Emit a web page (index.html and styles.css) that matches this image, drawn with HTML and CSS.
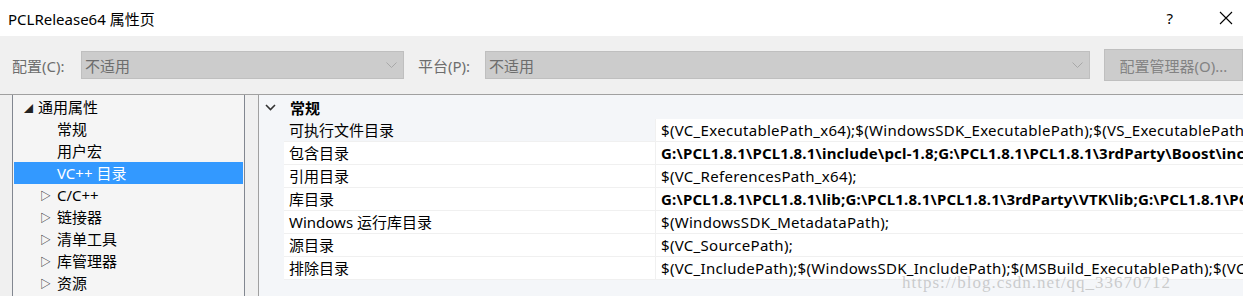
FILE: index.html
```html
<!DOCTYPE html>
<html lang="zh-CN">
<head>
  <meta charset="UTF-8">
  <title>PCLRelease64 属性页</title>
  <link rel="stylesheet" href="styles.css">
</head>
<body>
  <header class="titlebar">
    <div class="title">PCLRelease64 属性页</div>
    <div class="title-btns">
      <span class="help">?</span>
      <svg class="close" width="14" height="14" viewBox="0 0 14 14"><path d="M1 1L13 13M13 1L1 13" stroke="#000" stroke-width="1.1" fill="none"/></svg>
    </div>
  </header>

  <div class="toolbar">
    <label class="lbl lbl-config">配置(C):</label>
    <div class="combo combo-config"><span>不适用</span><svg class="chev" width="11" height="6" viewBox="0 0 11 6"><path d="M0.5 0.5L5.5 5.5L10.5 0.5" stroke="#a8a8a8" fill="none"/></svg></div>
    <label class="lbl lbl-platform">平台(P):</label>
    <div class="combo combo-platform"><span>不适用</span><svg class="chev" width="11" height="6" viewBox="0 0 11 6"><path d="M0.5 0.5L5.5 5.5L10.5 0.5" stroke="#a8a8a8" fill="none"/></svg></div>
    <button class="mgr-btn" disabled>配置管理器(O)...</button>
  </div>

  <div class="main">
    <div class="tree">
      <div class="node root"><span class="tri-open">◢</span>通用属性</div>
      <div class="node leaf">常规</div>
      <div class="node leaf">用户宏</div>
      <div class="node leaf selected">VC++ 目录</div>
      <div class="node closed"><span class="tri">▷</span>C/C++</div>
      <div class="node closed"><span class="tri">▷</span>链接器</div>
      <div class="node closed"><span class="tri">▷</span>清单工具</div>
      <div class="node closed"><span class="tri">▷</span>库管理器</div>
      <div class="node closed"><span class="tri">▷</span>资源</div>
    </div>

    <div class="grid">
      <div class="cat">
        <svg class="cat-chev" width="11" height="7" viewBox="0 0 11 7"><path d="M1 1L5.5 5.5L10 1" stroke="#333" stroke-width="1.6" fill="none"/></svg>
        <span>常规</span>
      </div>
      <div class="row first"><div class="name">可执行文件目录</div><div class="val">$(VC_ExecutablePath_x64);$(WindowsSDK_ExecutablePath);$(VS_ExecutablePath);$(MSBuild_ExecutablePath);</div></div>
      <div class="row"><div class="name">包含目录</div><div class="val bold">G:\PCL1.8.1\PCL1.8.1\include\pcl-1.8;G:\PCL1.8.1\PCL1.8.1\3rdParty\Boost\include\boost-1_64;</div></div>
      <div class="row"><div class="name">引用目录</div><div class="val">$(VC_ReferencesPath_x64);</div></div>
      <div class="row"><div class="name">库目录</div><div class="val bold">G:\PCL1.8.1\PCL1.8.1\lib;G:\PCL1.8.1\PCL1.8.1\3rdParty\VTK\lib;G:\PCL1.8.1\PCL1.8.1\3rdParty\Boost\lib;</div></div>
      <div class="row"><div class="name">Windows 运行库目录</div><div class="val">$(WindowsSDK_MetadataPath);</div></div>
      <div class="row"><div class="name">源目录</div><div class="val">$(VC_SourcePath);</div></div>
      <div class="row"><div class="name">排除目录</div><div class="val">$(VC_IncludePath);$(WindowsSDK_IncludePath);$(MSBuild_ExecutablePath);$(VC_LibraryPath_x64);</div></div>
      <div class="watermark">https://blog.csdn.net/qq_33670712</div>
    </div>
  </div>
</body>
</html>
```

FILE: styles.css
```css
body {
  margin: 0;
  background: #f0f0f0;
  font-family: "Noto Sans", "Noto Sans CJK SC", sans-serif;
  font-size: 15px;
  color: #000;
  width: 1243px;
  height: 296px;
  overflow: hidden;
}
.titlebar {
  height: 36px;
  background: #fff;
  display: flex;
  align-items: center;
  justify-content: space-between;
}
.title {
  padding-left: 8px;
  font-size: 15px;
}
.title-btns {
  display: flex;
  align-items: center;
}
.help {
  font-size: 15px;
  margin-right: 46px;
}
.close {
  margin-right: 10px;
}
.toolbar {
  height: 59px;
  display: flex;
  align-items: center;
  border-bottom: 1px solid #a0a0a0;
  box-sizing: border-box;
}
.lbl {
  color: #6d6d6d;
  font-size: 15px;
  flex: none;
}
.lbl-config {
  margin-left: 12px;
  width: 69px;
}
.lbl-platform {
  margin-left: 14px;
  width: 67px;
}
.combo {
  flex: none;
  height: 28px;
  background: #cccccc;
  border: 1px solid #bfbfbf;
  box-sizing: border-box;
  display: flex;
  align-items: center;
  justify-content: space-between;
  color: #6d6d6d;
  font-size: 15px;
  padding: 0 6px 0 3px;
}
.combo-config {
  width: 323px;
}
.combo-platform {
  width: 605px;
}
.mgr-btn {
  flex: none;
  margin-left: 14px;
  width: 139px;
  height: 32px;
  background: #cccccc;
  border: 1px solid #bfbfbf;
  color: #838383;
  font-family: inherit;
  font-size: 15px;
  padding: 0;
}
.main {
  display: flex;
  height: 201px;
}
.tree {
  flex: none;
  margin-left: 12px;
  width: 233px;
  box-sizing: border-box;
  border-left: 1px solid #828790;
  border-right: 1px solid #828790;
  background: #f5f5f5;
  padding: 1px 1px 0;
}
.node {
  height: 22px;
  line-height: 22px;
  white-space: nowrap;
}
.root {
  padding-left: 10px;
}
.tri-open {
  font-size: 9px;
  display: inline-block;
  width: 14px;
  vertical-align: 1px;
  color: #222;
}
.leaf {
  padding-left: 43px;
}
.selected {
  background: #3399ff;
  color: #fff;
}
.closed {
  padding-left: 26px;
}
.tri {
  display: inline-block;
  width: 17px;
  font-size: 11px;
  color: #222;
  vertical-align: 1px;
}
.grid {
  margin-left: 13px;
  flex: 1;
  min-width: 0;
  border-left: 1px solid #a0a0a0;
  background: #f4f6f9;
  position: relative;
  overflow: hidden;
}
.cat {
  height: 24px;
  display: flex;
  align-items: center;
  font-weight: bold;
}
.cat-chev {
  margin-left: 6px;
  margin-right: 14px;
}
.row {
  display: flex;
  height: 23px;
  margin-left: 25px;
  background: #fff;
  border-bottom: 1px solid #f0f0f0;
  box-sizing: border-box;
}
.row.first {
  background: #f4f6f9;
}
.name {
  flex: none;
  width: 366px;
  padding-left: 5px;
  line-height: 22px;
  border-right: 1px solid #f0f0f0;
  white-space: nowrap;
}
.val {
  flex: 1;
  min-width: 0;
  background: #fff;
  padding-left: 5px;
  line-height: 22px;
  white-space: nowrap;
  overflow: hidden;
  letter-spacing: 0.3px;
}
.bold {
  font-weight: bold;
  letter-spacing: 0.2px;
}
.watermark {
  position: absolute;
  left: 643px;
  top: 178px;
  font-family: "Liberation Serif", serif;
  font-size: 17px;
  color: rgba(160, 160, 160, 0.5);
  letter-spacing: 1px;
  white-space: nowrap;
}
```
